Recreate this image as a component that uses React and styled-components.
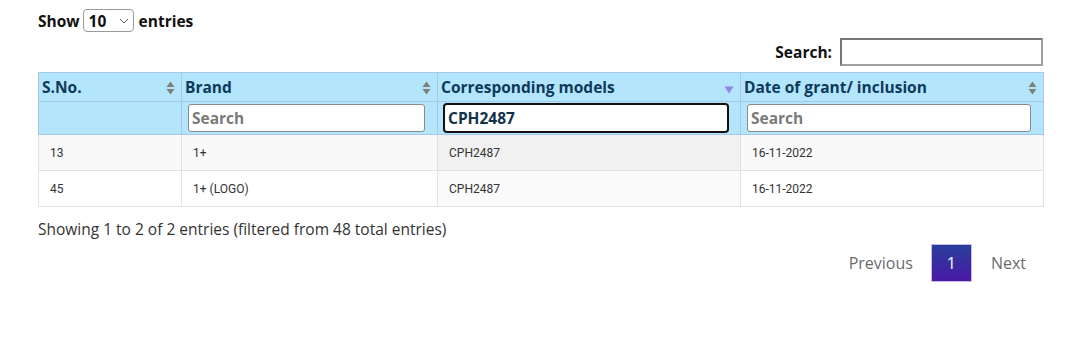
import React, { useState } from "react";
import styled, { createGlobalStyle } from "styled-components";

const Global = createGlobalStyle`
  html, body { margin: 0; padding: 0; background: #fff; }
  body { font-family: "Open Sans", "Noto Sans", sans-serif; color: #333; }
  * { box-sizing: border-box; }
`;

const Wrapper = styled.div`
  padding: 8px 37px 0 38px;
  width: 1080px;
`;

const TopBar = styled.div`
  display: flex;
  align-items: center;
  font-weight: 700;
  font-size: 15.5px;
  color: #111;
  height: 25px;
`;

const SelectBox = styled.div`
  position: relative;
  width: 51px;
  height: 23px;
  margin: 0 5px 0 3px;
  border: 1px solid #9a9a9a;
  border-radius: 4px;
  display: flex;
  align-items: center;
  padding-left: 5px;
  font-weight: 700;
  font-size: 15.5px;
  color: #111;
`;

const Chevron = styled.svg`
  position: absolute;
  right: 4px;
  top: 8px;
`;

const SearchRow = styled.div`
  display: flex;
  justify-content: flex-end;
  align-items: center;
  gap: 8px;
  margin-top: 4px;
  height: 30px;
  font-weight: 700;
  font-size: 15.5px;
  color: #111;
`;

const GlobalSearch = styled.input`
  width: 203px;
  height: 28px;
  border: 2px solid;
  border-color: #767676 #a0a0a0 #a0a0a0 #767676;
  outline: none;
`;

const Table = styled.table`
  margin-top: 5px;
  width: 1005px;
  border-collapse: collapse;
  table-layout: fixed;
`;

const HeadCell = styled.th`
  position: relative;
  background: #b3e5fc;
  color: #0e3a5a;
  font-size: 15.5px;
  font-weight: 700;
  text-align: left;
  height: 29px;
  padding: 0 20px 0 3px;
  border: 1px solid #a6c8e6;
  white-space: nowrap;
`;

const SortIcon = styled.svg`
  position: absolute;
  right: 6px;
  top: ${(p) => (p.$active ? "13px" : "8px")};
`;

const FilterCell = styled.td`
  background: #b3e5fc;
  height: 33px;
  padding: 0 12px 0 6px;
  border: 1px solid #a6c8e6;
`;

const FilterInput = styled.input`
  display: block;
  width: 100%;
  height: 28px;
  margin-top: -1px;
  border: 1px solid ${(p) => (p.$focused ? "#111" : "#8a8a8a")};
  box-shadow: ${(p) => (p.$focused ? "0 0 0 1px #111" : "none")};
  border-radius: 3px;
  padding: 0 3px;
  font-family: "Open Sans", sans-serif;
  font-weight: 700;
  font-size: 15.5px;
  color: #12324a;
  background: #fff;
  outline: none;
  &::placeholder { color: #7a7a7a; }
`;

const DataRow = styled.tr`
  background: ${(p) => (p.$odd ? "#f9f9f9" : "#fff")};
`;

const DataCell = styled.td`
  height: 36px;
  padding: 0 10px 0 11px;
  font-family: Roboto, "Liberation Sans", sans-serif;
  font-size: 12px;
  color: #333;
  border: 1px solid #e2e2e2;
  background: ${(p) => (p.$sorted ? (p.$odd ? "#f1f1f1" : "#fafafa") : "transparent")};
`;

const Footer = styled.div`
  margin-top: 11px;
  font-size: 15.5px;
  color: #333;
`;

const Pager = styled.div`
  display: flex;
  justify-content: flex-end;
  align-items: center;
  margin-top: 4px;
`;

const PageLink = styled.span`
  font-size: 16px;
  color: #6b6b6b;
  padding: 0 17px 0 18px;
  line-height: 38px;
`;

const PageCurrent = styled.span`
  width: 41px;
  height: 38px;
  display: flex;
  align-items: center;
  justify-content: center;
  background: linear-gradient(to bottom, #283f9b 0%, #4a18a6 100%);
  color: #fff;
  font-size: 16px;
  border: 1px solid #c9b8e8;
  margin: 0 1px;
`;

const BothArrows = () => (
  <SortIcon width="9" height="14" viewBox="0 0 9 14">
    <path d="M4.5 0.5 L8.5 6 L0.5 6 Z" fill="#7f7f7f" />
    <path d="M4.5 13.5 L8.5 8 L0.5 8 Z" fill="#7f7f7f" />
  </SortIcon>
);

const DownArrow = () => (
  <SortIcon $active width="10" height="8" viewBox="0 0 10 8">
    <path d="M0.5 0.5 L9.5 0.5 L5 7.5 Z" fill="#8f86e6" />
  </SortIcon>
);

const columns = [
  { title: "S.No.", width: 143 },
  { title: "Brand", width: 256 },
  { title: "Corresponding models", width: 303, sorted: true },
  { title: "Date of grant/ inclusion", width: 303 },
];

const rows = [
  ["13", "1+", "CPH2487", "16-11-2022"],
  ["45", "1+ (LOGO)", "CPH2487", "16-11-2022"],
];

export default function App() {
  const [model, setModel] = useState("CPH2487");
  return (
    <>
      <Global />
      <Wrapper>
        <TopBar>
          Show
          <SelectBox>
            10
            <Chevron width="10" height="6" viewBox="0 0 10 6">
              <path d="M1 1 L5 5 L9 1" fill="none" stroke="#555" strokeWidth="1" />
            </Chevron>
          </SelectBox>
          entries
        </TopBar>
        <SearchRow>
          Search:
          <GlobalSearch />
        </SearchRow>
        <Table>
          <colgroup>
            {columns.map((c) => (
              <col key={c.title} style={{ width: c.width }} />
            ))}
          </colgroup>
          <thead>
            <tr>
              {columns.map((c) => (
                <HeadCell key={c.title}>
                  {c.title}
                  {c.sorted ? <DownArrow /> : <BothArrows />}
                </HeadCell>
              ))}
            </tr>
            <tr>
              <FilterCell />
              <FilterCell>
                <FilterInput placeholder="Search" />
              </FilterCell>
              <FilterCell>
                <FilterInput $focused value={model} onChange={(e) => setModel(e.target.value)} />
              </FilterCell>
              <FilterCell>
                <FilterInput placeholder="Search" />
              </FilterCell>
            </tr>
          </thead>
          <tbody>
            {rows.map((r, i) => (
              <DataRow key={r[0]} $odd={i % 2 === 0}>
                {r.map((v, j) => (
                  <DataCell key={j} $sorted={j === 2} $odd={i % 2 === 0}>
                    {v}
                  </DataCell>
                ))}
              </DataRow>
            ))}
          </tbody>
        </Table>
        <Footer>Showing 1 to 2 of 2 entries (filtered from 48 total entries)</Footer>
        <Pager>
          <PageLink>Previous</PageLink>
          <PageCurrent>1</PageCurrent>
          <PageLink>Next</PageLink>
        </Pager>
      </Wrapper>
    </>
  );
}
